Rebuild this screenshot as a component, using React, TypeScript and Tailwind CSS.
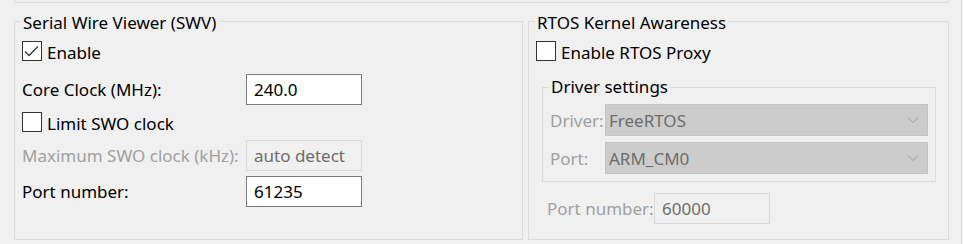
import { ReactNode } from "react";

const font = { fontFamily: '"Noto Sans", "Open Sans", sans-serif' };

function CheckBox({ checked, label }: { checked?: boolean; label: string }) {
  return (
    <div className="flex items-center gap-[5px] h-[20px]">
      <div className="w-[20px] h-[20px] border border-[#333333] bg-white shrink-0">
        {checked && (
          <svg width="18" height="18" viewBox="0 0 18 18" className="block">
            <polyline
              points="2,9.5 6,13.5 15,4.5"
              fill="none"
              stroke="#333333"
              strokeWidth="1.3"
            />
          </svg>
        )}
      </div>
      <span className="leading-[22px] mt-[3px]">{label}</span>
    </div>
  );
}

function Field({
  label,
  value,
  disabled,
  labelWidth,
}: {
  label: string;
  value: string;
  disabled?: boolean;
  labelWidth: string;
}) {
  return (
    <div className="flex items-center h-[31px]">
      <span
        className={`${labelWidth} shrink-0 leading-[22px] mt-[1px] ${
          disabled ? "text-[#a0a0a0]" : "text-black"
        }`}
      >
        {label}
      </span>
      <div
        className={`w-[116px] h-[31px] flex items-center pl-[7px] border ${
          disabled
            ? "border-[#d9d9d9] bg-[#f0f0f0] text-[#6d6d6d]"
            : "border-[#7a7a7a] bg-white text-black"
        }`}
      >
        <span className="leading-[22px] mt-[1px]">{value}</span>
      </div>
    </div>
  );
}

function Select({ label, value }: { label: string; value: string }) {
  return (
    <div className="flex items-center h-[32px]">
      <span className="w-[55px] shrink-0 leading-[22px] mt-[1px] text-[#a0a0a0]">
        {label}
      </span>
      <div className="w-[323px] h-[32px] flex items-center justify-between pl-[3px] pr-[8px] border border-[#c3c3c3] bg-[#cccccc] text-[#6d6d6d]">
        <span className="leading-[22px] mt-[1px]">{value}</span>
        <svg width="12" height="8" viewBox="0 0 12 8">
          <polyline points="1,1.5 6,6.5 11,1.5" fill="none" stroke="#a0a0a0" strokeWidth="1" />
        </svg>
      </div>
    </div>
  );
}

function Group({
  title,
  className,
  children,
}: {
  title: string;
  className: string;
  children: ReactNode;
}) {
  return (
    <section className={`border border-[#dcdcdc] ${className}`}>
      <div className="-mt-[10px] ml-[6px] w-fit px-[2px] bg-[#f0f0f0] leading-[22px]">
        {title}
      </div>
      {children}
    </section>
  );
}

export default function App() {
  return (
    <div
      className="w-[963px] h-[244px] bg-[#f0f0f0] overflow-hidden text-[17px] text-black"
      style={font}
    >
      <div className="w-[962px] h-full border-r border-[#dcdcdc]">
        <div className="ml-[14px] w-[935px] h-[3px] border-x border-b border-[#dcdcdc]" />

        <div className="flex gap-[5px] ml-[14px] mt-[18px]">
          <Group title="Serial Wire Viewer (SWV)" className="w-[509px] h-[219px]">
            <div className="pl-[7px]">
              <div className="mt-[7px]">
                <CheckBox checked label="Enable" />
              </div>
              <div className="mt-[13px]">
                <Field label="Core Clock (MHz):" value="240.0" labelWidth="w-[224px]" />
              </div>
              <div className="mt-[7px]">
                <CheckBox label="Limit SWO clock" />
              </div>
              <div className="mt-[8px]">
                <Field
                  label="Maximum SWO clock (kHz):"
                  value="auto detect"
                  disabled
                  labelWidth="w-[224px]"
                />
              </div>
              <div className="mt-[5px]">
                <Field label="Port number:" value="61235" labelWidth="w-[224px]" />
              </div>
            </div>
          </Group>

          <Group title="RTOS Kernel Awareness" className="w-[421px] h-[219px]">
            <div className="pl-[7px] mt-[7px]">
              <CheckBox label="Enable RTOS Proxy" />
            </div>
            <div className="ml-[13px] mt-[26px] w-[394px] h-[95px] border border-[#dcdcdc]">
              <div className="-mt-[12px] ml-[6px] w-fit px-[2px] bg-[#f0f0f0] leading-[22px]">
                Driver settings
              </div>
              <div className="pl-[7px] mt-[6px] flex flex-col gap-[6px]">
                <Select label="Driver:" value="FreeRTOS" />
                <Select label="Port:" value="ARM_CM0" />
              </div>
            </div>
            <div className="pl-[18px] mt-[11px]">
              <Field label="Port number:" value="60000" disabled labelWidth="w-[107px]" />
            </div>
          </Group>
        </div>
      </div>
    </div>
  );
}
